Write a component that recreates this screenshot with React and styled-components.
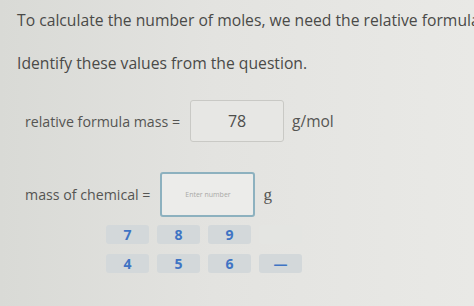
import styled, { createGlobalStyle } from 'styled-components';

const Global = createGlobalStyle`
  html, body {
    margin: 0;
    padding: 0;
  }
  body {
    font-family: 'Open Sans', 'Liberation Sans', sans-serif;
    background: #e2e2df;
  }
`;

const Page = styled.div`
  width: 474px;
  height: 306px;
  overflow: hidden;
  box-sizing: border-box;
  padding: 10px 0 0 17px;
  background: linear-gradient(90deg, #d9dad6 0%, #e3e3e0 45%, #e9e9e6 100%);
  color: #4a4a48;
`;

const Line = styled.div`
  font-size: 15.7px;
  white-space: nowrap;
  line-height: 20px;
  margin-bottom: ${(p) => p.$gap || 0}px;
`;

const Row = styled.div`
  display: flex;
  align-items: center;
  margin-left: 8px;
  margin-bottom: ${(p) => p.$gap || 0}px;
`;

const Label = styled.span`
  font-size: 14.2px;
  color: #555553;
  margin-right: 10px;
  white-space: nowrap;
`;

const Box = styled.div`
  width: ${(p) => (p.$focus ? 95 : 94)}px;
  height: ${(p) => (p.$focus ? 45 : 42)}px;
  box-sizing: border-box;
  border: ${(p) => (p.$focus ? '2px solid #8db1bf' : '1px solid #c9c9c5')};
  border-radius: 3px;
  background: ${(p) => (p.$focus ? '#ececea' : '#e7e7e4')};
  display: flex;
  align-items: center;
  justify-content: center;
  font-size: 16px;
  color: #4e4e4c;
`;

const Placeholder = styled.span`
  font-size: 7px;
  color: #a9a9a6;
`;

const Unit = styled.span`
  margin-left: ${(p) => p.$ml || 8}px;
  font-size: ${(p) => p.$size || 15.5}px;
  font-family: ${(p) => (p.$serif ? "'Liberation Serif', serif" : 'inherit')};
  color: #555553;
`;

const Pad = styled.div`
  display: grid;
  grid-template-columns: repeat(4, 43px);
  grid-auto-rows: 19px;
  column-gap: 8px;
  row-gap: 10px;
  margin: 8px 0 0 89px;
`;

const Key = styled.div`
  border-radius: 3px;
  background: ${(p) => (p.$faint ? '#e4e5e2' : '#d3d8da')};
  color: #3f74c4;
  font-weight: 700;
  font-size: 14px;
  display: flex;
  align-items: center;
  justify-content: center;
`;

const keys = ['7', '8', '9', '', '4', '5', '6', '—'];

export default function App() {
  return (
    <Page>
      <Global />
      <Line $gap={23}>To calculate the number of moles, we need the relative formula mass of the chemical.</Line>
      <Line $gap={27}>Identify these values from the question.</Line>
      <Row $gap={30}>
        <Label>relative formula mass =</Label>
        <Box>78</Box>
        <Unit>g/mol</Unit>
      </Row>
      <Row>
        <Label>mass of chemical =</Label>
        <Box $focus>
          <Placeholder>Enter number</Placeholder>
        </Box>
        <Unit $serif $size={17}>g</Unit>
      </Row>
      <Pad>
        {keys.map((k, i) => (
          <Key key={i} $faint={k === ''}>
            {k}
          </Key>
        ))}
      </Pad>
    </Page>
  );
}
